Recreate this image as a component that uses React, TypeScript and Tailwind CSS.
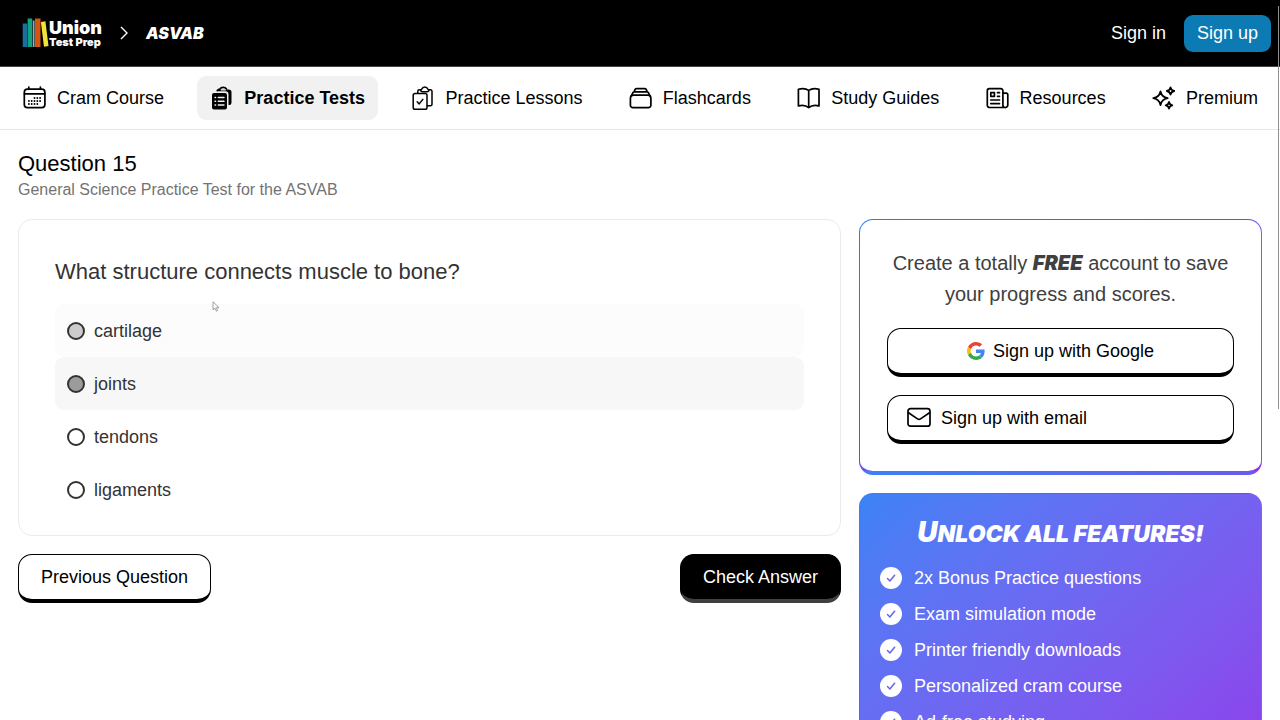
import type { ReactNode } from "react";

const iconProps = {
  viewBox: "0 0 24 24",
  fill: "none",
  stroke: "currentColor",
  strokeWidth: 1.7,
  strokeLinecap: "round" as const,
  strokeLinejoin: "round" as const,
  "aria-hidden": true,
  className: "size-6 shrink-0",
};

function CalendarIcon() {
  return (
    <svg {...iconProps}>
      <rect x="1.3" y="3.2" width="20.6" height="18.500" rx="3.200" />
      <path d="M1.500 7.800h20.200M5.800 1v2.200M17.400 1v2.200" />
      <path
        d="M11.500 12h0M14.300 12h0M17.100 12h0M5.900 15h0M8.700 15h0M11.500 15h0M14.300 15h0M17.100 15h0M5.900 18h0M8.700 18h0M11.500 18h0M14.300 18h0"
        strokeWidth="1.900"
      />
    </svg>
  );
}

function TestsIcon() {
  return (
    <svg {...iconProps}>
      <path
        d="M7.500 3.600h11.200A2.800 2.800 0 0 1 21.500 6.400v10.400a2.300 2.300 0 0 1-2.300 2.300h-.7V8.500A3.200 3.200 0 0 0 15.300 5.300H6.500z"
        fill="currentColor"
        stroke="none"
      />
      <path d="M7.300 4.500C8 3.600 9 3.500 10 3c1.200-2.200 5.200-2.200 6.400 0" strokeWidth="1.700" />
      <path d="M11.300 3.900h4" stroke="#f1f1f1" strokeWidth="1.100" />
      <rect x="2" y="7" width="15" height="16.500" rx="2" fill="currentColor" stroke="none" />
      <path d="M5 11.500h.6M8.300 11.500H14M5 15.200h.6M8.300 15.200H14M5 19h.6M8.300 19H14" stroke="#f1f1f1" strokeWidth="1.400" />
    </svg>
  );
}

function LessonsIcon() {
  return (
    <svg {...iconProps} strokeWidth={1.5}>
      <rect x="2.200" y="7.500" width="13.800" height="15.700" rx="1.800" />
      <path d="m6.200 15.800 2 2.100 3.600-4.500" />
      <path d="M6.800 7.200V5.300a1.500 1.500 0 0 1 1.500-1.500h1.300M18 3.800h1.500A1.500 1.500 0 0 1 21 5.300v13a1.500 1.500 0 0 1-1.500 1.500h-3.200" />
      <path d="M9.600 3.800a1.200 1.200 0 0 0 1.200-.8 3.200 3.200 0 0 1 6 0 1.200 1.200 0 0 0 1.200.8 2 2 0 0 1-2 1.900h-4.400a2 2 0 0 1-2-1.900z" />
    </svg>
  );
}

function CardsIcon() {
  return (
    <svg {...iconProps}>
      <path d="M4.200 9.200h14.900a2.800 2.800 0 0 1 2.700 2.500l.1 1.300v6.200a2.500 2.500 0 0 1-2.500 2.500H3.900a2.500 2.500 0 0 1-2.500-2.500V13l.1-1.300a2.800 2.800 0 0 1 2.700-2.500z" />
      <path d="m2.600 9.700 1.300-3a1.500 1.500 0 0 1 1.300-.9h12.900a1.500 1.500 0 0 1 1.300.9l1.300 3M5.200 5.500l.8-1.900a1.500 1.500 0 0 1 1.300-.9H16a1.500 1.500 0 0 1 1.300.9l.8 1.900" />
    </svg>
  );
}

function BookIcon() {
  return (
    <svg {...iconProps}>
      <path d="M11.700 4.400v17.200M11.700 4.400C8.900 2.300 4.900 2.200 1.400 3.200v16.700c3.500-1 7.500-.7 10.300 1.700 2.800-2.400 6.800-2.700 10.300-1.700V3.200c-3.500-1-7.500-.9-10.300 1.200z" />
    </svg>
  );
}

function NewsIcon() {
  return (
    <svg {...iconProps}>
      <path d="M19 21.500H3.500a2.200 2.200 0 0 1-2.200-2.200V4.700a2 2 0 0 1 2-2h11.600a2 2 0 0 1 2 2v14.600a2.200 2.200 0 0 0 2.100 2.200 2.400 2.400 0 0 0 2.800-2.400V8.700a1.500 1.500 0 0 0-1.500-1.500h-3.200" />
      <path d="M4.800 6.700h3.600v3.600H4.800zM11.500 6.700h2M11.500 10.300h2M4.800 14h8.700M4.800 17.600h8.700" />
    </svg>
  );
}

function SparklesIcon() {
  return (
    <svg {...iconProps} strokeWidth={1.8}>
      <path d="M8.500 5.500c.9 4 2.900 5.900 7.200 6.700-4.300.8-6.300 2.700-7.200 6.900-.9-4.200-2.900-6.100-7.200-6.900 4.300-.8 6.300-2.700 7.200-6.700z" />
      <path d="M18.500 1.300c.4 2.200 1.400 3.200 3.700 3.700-2.300.4-3.300 1.500-3.700 3.700-.4-2.200-1.400-3.300-3.700-3.700 2.300-.5 3.300-1.500 3.700-3.700zM17 16c.4 2 1.300 2.900 3.300 3.300-2 .4-2.900 1.300-3.300 3.300-.4-2-1.300-2.900-3.300-3.300 2-.4 2.900-1.300 3.300-3.300z" />
    </svg>
  );
}

function MailIcon() {
  return (
    <svg {...iconProps}>
      <rect x="1" y="2.700" width="22" height="17.500" rx="2.500" />
      <path d="m1.500 6.700 9 6.200a2.700 2.700 0 0 0 3 0l9-6.200" />
    </svg>
  );
}

function GoogleIcon() {
  return (
    <svg viewBox="0 0 48 48" aria-hidden="true" className="size-[18px] shrink-0">
      <path fill="#EA4335" d="M24 9.500c3.540 0 6.710 1.220 9.210 3.600l6.850-6.850C35.900 2.380 30.470 0 24 0 14.620 0 6.510 5.380 2.560 13.220l7.980 6.190C12.430 13.720 17.740 9.500 24 9.500z" />
      <path fill="#4285F4" d="M46.980 24.550c0-1.570-.15-3.090-.38-4.550H24v9.020h12.940c-.58 2.960-2.260 5.480-4.780 7.180l7.730 6c4.510-4.180 7.090-10.360 7.090-17.650z" />
      <path fill="#FBBC05" d="M10.530 28.590c-.48-1.450-.76-2.990-.76-4.590s.27-3.140.76-4.590l-7.980-6.190C.92 16.460 0 20.120 0 24c0 3.880.92 7.540 2.560 10.780l7.970-6.190z" />
      <path fill="#34A853" d="M24 48c6.480 0 11.930-2.130 15.890-5.810l-7.730-6c-2.150 1.450-4.920 2.300-8.160 2.300-6.260 0-11.570-4.220-13.470-9.910l-7.980 6.190C6.510 42.620 14.620 48 24 48z" />
    </svg>
  );
}

function CheckBadge() {
  return (
    <svg viewBox="0 0 22 22" aria-hidden="true" className="size-[22px] shrink-0">
      <circle cx="11" cy="11" r="11" fill="#fff" />
      <path
        d="m7.500 11.500 2.400 2.500 4.700-5.800"
        fill="none"
        stroke="#6366e8"
        strokeWidth="1.500"
        strokeLinecap="round"
        strokeLinejoin="round"
      />
    </svg>
  );
}

function Logo() {
  return (
    <a href="#" className="flex items-center text-white" aria-label="Union Test Prep">
      <svg viewBox="0 0 27 32" aria-hidden="true" className="h-8 w-[27px]">
        <path fill="#1a6f9e" d="M.7 6.500h4.500V30H.7z" />
        <path fill="#12a37f" d="M5.600 1.500h4.600V30H5.600z" />
        <path fill="#8fb3bd" d="M10.800 3.500h1.700V30h-1.700z" />
        <path fill="#d2560f" d="M13 1.500h5.500V30H13z" />
        <path fill="#f0e33a" d="m18.900 5 4.500-.7L26.500 29l-4.500.8z" />
      </svg>
      <span className="flex flex-col pt-0.5 font-[Inter,sans-serif] font-black">
        <span className="text-[18px] leading-4">Union</span>
        <span className="text-[11px] leading-3">Test Prep</span>
      </span>
    </a>
  );
}

const navItems: { label: string; icon: ReactNode; active?: boolean }[] = [
  { label: "Cram Course", icon: <CalendarIcon /> },
  { label: "Practice Tests", icon: <TestsIcon />, active: true },
  { label: "Practice Lessons", icon: <LessonsIcon /> },
  { label: "Flashcards", icon: <CardsIcon /> },
  { label: "Study Guides", icon: <BookIcon /> },
  { label: "Resources", icon: <NewsIcon /> },
  { label: "Premium", icon: <SparklesIcon /> },
];

const answers = [
  { label: "cartilage", row: "bg-[#fcfcfc]", dot: "bg-[#cccccc]" },
  { label: "joints", row: "bg-[#f7f7f7]", dot: "bg-[#9b9b9b]" },
  { label: "tendons", row: "", dot: "bg-white" },
  { label: "ligaments", row: "", dot: "bg-white" },
];

const features = [
  "2x Bonus Practice questions",
  "Exam simulation mode",
  "Printer friendly downloads",
  "Personalized cram course",
  "Ad-free studying",
];

const outlineButton =
  "flex items-center rounded-[14px] border border-b-4 border-black bg-white text-lg leading-[44px] text-black";

const markerFont = "font-[Inter,sans-serif] font-black italic";

export default function App() {
  return (
    <div className="relative h-screen overflow-hidden bg-white font-['Liberation_Sans',sans-serif] text-lg text-black">
      <header className="flex h-[67px] items-center justify-between border-b border-[#444] bg-black pr-[9px] pl-[22px]">
        <div className="flex items-center">
          <Logo />
          <svg viewBox="0 0 8 14" fill="none" stroke="#fff" strokeWidth="1.400" aria-hidden="true" className="mx-[18px] h-[14px] w-2">
            <path d="m1 1 6 6-6 6" />
          </svg>
          <a href="#" className={`text-base text-white ${markerFont}`}>
            ASVAB
          </a>
        </div>
        <div className="flex items-center gap-[18px] text-white">
          <a href="#">Sign in</a>
          <a href="#" className="rounded-[9px] bg-[#0c7bb3] px-[13px] leading-[37px]">
            Sign up
          </a>
        </div>
      </header>

      <nav className="flex h-[63px] items-center justify-between border-b border-[#e5e5e5] pr-[9px] pl-[10px]">
        {navItems.map((item) => (
          <a
            key={item.label}
            href="#"
            aria-current={item.active ? "page" : undefined}
            className={`flex h-11 items-center gap-[10px] rounded-[9px] px-[13px] whitespace-nowrap ${
              item.active ? "bg-[#f1f1f1] font-bold" : ""
            }`}
          >
            {item.icon}
            {item.label}
          </a>
        ))}
      </nav>

      <main className="px-[18px] pt-5">
        <h1 className="text-[22px] leading-7">Question 15</h1>
        <p className="text-base leading-6 text-[#737373]">General Science Practice Test for the ASVAB</p>

        <div className="mt-[17px] flex items-start gap-[18px]">
          <form className="min-w-0 flex-1" onSubmit={(e) => e.preventDefault()}>
            <fieldset className="rounded-[14px] border border-[#ebebeb] px-9 pt-9 pb-[19px] text-[#333]">
              <legend className="float-left mb-4 w-full text-[22px] leading-8">
                What structure connects muscle to bone?
              </legend>
              <div className="clear-both">
                {answers.map((answer) => (
                  <label
                    key={answer.label}
                    className={`flex h-[53px] items-center gap-[9px] rounded-[9px] px-3 ${answer.row}`}
                  >
                    <input
                      type="radio"
                      name="answer"
                      className={`size-[18px] appearance-none rounded-full border-2 border-[#333] ${answer.dot}`}
                    />
                    {answer.label}
                  </label>
                ))}
              </div>
            </fieldset>

            <div className="mt-[18px] flex justify-between">
              <button type="button" className={`${outlineButton} px-[22px]`}>
                Previous Question
              </button>
              <button
                type="submit"
                className="rounded-[14px] border border-b-4 border-black border-b-[#404040] bg-black px-[22px] leading-[44px] text-white"
              >
                Check Answer
              </button>
            </div>
          </form>

          <aside className="flex w-[403px] shrink-0 flex-col gap-[18px]">
            <section className="flex flex-col gap-[18px] rounded-[14px] border border-b-4 border-transparent bg-[linear-gradient(#fff,#fff),linear-gradient(to_bottom_right,#3b82f6,#9333ea)] px-[27px] pt-7 pb-[27px] [background-clip:padding-box,border-box]">
              <p className="text-center text-xl leading-[31px] text-[#404040]">
                Create a totally <strong className={`leading-none ${markerFont}`}>FREE</strong> account to save your
                progress and scores.
              </p>
              <button type="button" className={`${outlineButton} justify-center gap-2`}>
                <GoogleIcon />
                Sign up with Google
              </button>
              <button type="button" className={`${outlineButton} gap-[10px] px-[19px]`}>
                <MailIcon />
                Sign up with email
              </button>
            </section>

            <section className="rounded-[14px] border border-transparent bg-linear-to-br from-[#3b82f6] to-[#9333ea] px-5 pt-5 pb-24 text-white">
              <h2 className={`text-center text-[23px] leading-9 uppercase first-letter:text-[28px] ${markerFont}`}>
                Unlock all features!
              </h2>
              <ul className="mt-2">
                {features.map((feature) => (
                  <li key={feature} className="flex h-9 items-center gap-3">
                    <CheckBadge />
                    {feature}
                  </li>
                ))}
              </ul>
            </section>
          </aside>
        </div>
      </main>

      {/* Pointer */}
      <svg viewBox="0 0 8 11" aria-hidden="true" className="absolute top-[301px] left-[212px] h-[11px] w-2">
        <path d="M1 .8v8l2-1.700 1.300 3 1.300-.6-1.200-2.800H7z" fill="#fff" stroke="#888" strokeWidth=".8" />
      </svg>

      {/* Scroll thumb */}
      <div className="absolute top-1.5 right-px h-[403px] w-px bg-[#8f8f8f]" />
    </div>
  );
}
